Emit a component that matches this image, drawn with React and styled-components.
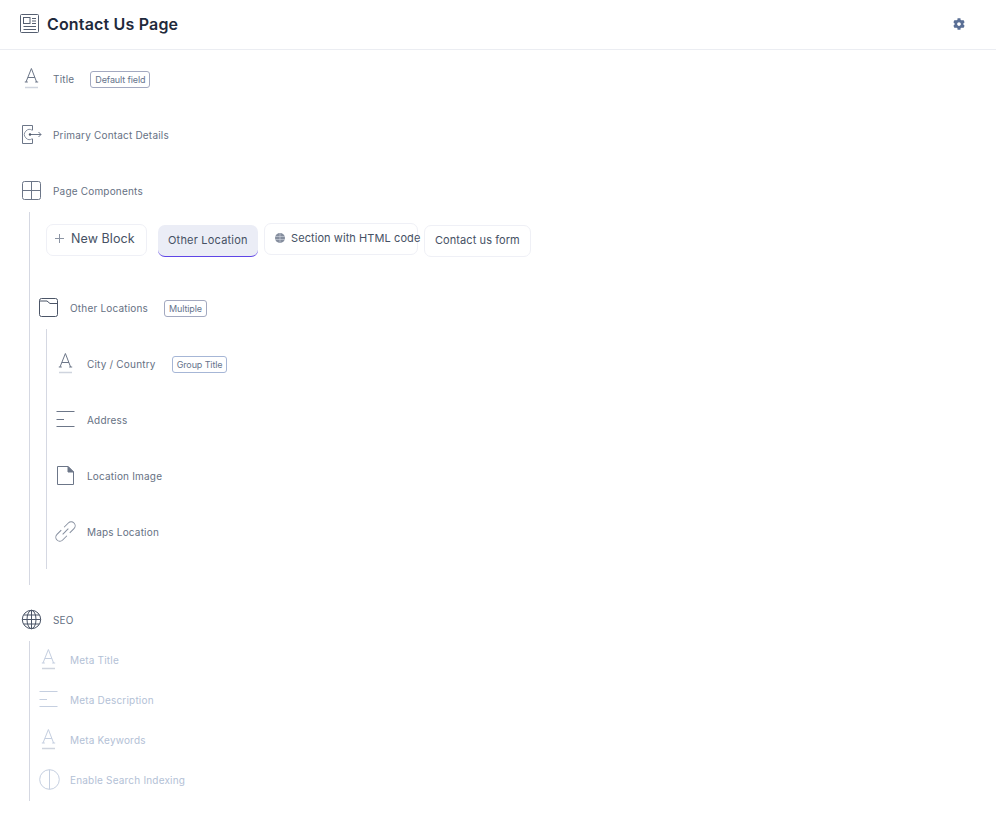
import React from 'react';
import styled, { createGlobalStyle } from 'styled-components';
import { FaCog } from 'react-icons/fa';

const GlobalStyle = createGlobalStyle`
  html, body {
    margin: 0;
    padding: 0;
    background: #fff;
    font-family: Inter, "Liberation Sans", sans-serif;
  }
`;

const Page = styled.div`
  width: 996px;
  min-height: 814px;
  background: #fff;
`;

const Header = styled.header`
  height: 49px;
  display: flex;
  align-items: center;
  padding: 0 31px 0 19px;
  border-bottom: 1px solid #ebedf2;
`;

const HeaderInner = styled.div`
  flex: 1;
  display: flex;
  align-items: center;
  padding-bottom: 1px;
`;

const PageTitle = styled.h1`
  margin: 0 auto 0 8px;
  font-size: 16px;
  font-weight: 600;
  letter-spacing: 0.17px;
  color: #1f2a3c;
`;

const Settings = styled.span`
  display: flex;
  color: #5a6f95;
  font-size: 12px;
`;

const Body = styled.main`
  padding: 9px 0 0 19px;
`;

const Row = styled.div`
  flex: none;
  height: 40px;
  display: flex;
  align-items: center;
  gap: 10px;
  margin-bottom: ${(p) => (p.$dense ? 0 : '16px')};
  color: ${(p) => (p.$muted ? '#b3c1d6' : '#667183')};
`;

const IconBox = styled.svg`
  width: 24px;
  height: 24px;
  flex: none;
  fill: none;
  stroke: ${(p) => (p.$muted ? '#c5cfe0' : '#6c7688')};
  stroke-width: 1;
`;

const Label = styled.span`
  font-size: 10px;
  letter-spacing: 0.19px;
  white-space: nowrap;
`;

const Badge = styled.span`
  height: 15px;
  display: inline-flex;
  align-items: center;
  padding: 0 4px;
  margin-left: 6px;
  font-size: 9px;
  letter-spacing: -0.12px;
  color: #66748c;
  border: 1px solid ${(p) => (p.$blue ? '#a6b6d6' : '#a3a9c0')};
  border-radius: 3px;
  white-space: nowrap;
`;

// the rail starts 1px below the row above it, the first child pulls back up
const Branch = styled.section`
  display: flex;
  flex-direction: column;
  margin: 1px 0 ${(p) => p.$after}px 10px;
  padding: ${(p) => p.$top || 0}px 0 1px 6px;
  border-left: 1px solid #d5d8e2;

  & > :first-child {
    margin-top: -1px;
  }
`;

const BlockBar = styled.div`
  flex: none;
  height: 77px;
  display: flex;
  align-items: flex-start;
  padding: 13px 0 0 10px;
  box-sizing: border-box;
`;

const Chip = styled.div`
  box-sizing: border-box;
  flex: none;
  width: ${(p) => p.$width}px;
  height: 32px;
  margin-top: ${(p) => p.$top || 0}px;
  margin-left: ${(p) => p.$left || 0}px;
  display: flex;
  align-items: center;
  gap: ${(p) => p.$gap || 6}px;
  padding-left: ${(p) => p.$pad || 10}px;
  padding-bottom: ${(p) => p.$lift || 0}px;
  font-size: ${(p) => p.$size || 11}px;
  letter-spacing: 0.08px;
  white-space: nowrap;
  color: #465164;
  background: #fff;
  border: 1px solid #eff0f6;
  border-radius: 7px;
`;

const ActiveChip = styled(Chip)`
  letter-spacing: 0.2px;
  background: #ebedf6;
  border: none;
  border-bottom: 1px solid #5f45e6;
`;

const PlusIcon = styled.svg`
  flex: none;
  width: 9px;
  height: 9px;
  stroke: #8b94a3;
  stroke-width: 1;
  fill: none;
`;

const WebIcon = styled.svg`
  flex: none;
  width: 10px;
  height: 10px;
  fill: #858e9e;
  stroke: #d4d8e0;
  stroke-width: 0.6;
`;

const A = () => (
  <>
    <path d="M7 15 12.400 1.500 17.600 15M8.800 10.500h7.200M5.800 15h3M16.200 15h3" />
    <path d="M6 20.500h13" stroke="#cfd4de" strokeWidth="1.500" />
  </>
);

const Lines = () => <path d="M3.500 3.500h18M3.500 11.500h7.500M3.500 18.500h18" />;

const icons = {
  text: <A />,
  lines: <Lines />,
  exit: (
    <>
      <path d="M13.500 7V2.500h-10v18h10V16" />
      <path d="M13.500 7.500a5 5 0 1 0 0 8" stroke="#8b94a3" />
      <path d="M11 11.500h11M19.500 9 22 11.500 19.500 14" />
      <circle cx="11" cy="11.500" r="1.200" fill="#4b5567" stroke="none" />
    </>
  ),
  grid: (
    <>
      <rect x="3.500" y="2.500" width="18" height="18" rx="2" />
      <path d="M12.500 2.500v18M3.500 11.500h18" />
    </>
  ),
  folder: (
    <>
      <rect x="3.500" y="2.500" width="18" height="18" rx="2" stroke="#4b5567" />
      <path d="M3.500 5H11l3 2.500h7.500" stroke="#4b5567" />
    </>
  ),
  file: (
    <>
      <path d="M4.500 2.500H15L20.500 8v12.500h-16z" />
      <path d="M15 2.500V8h5.500z" fill="#6c7688" />
    </>
  ),
  link: (
    <g transform="rotate(-45 12.500 11.500)" stroke="#868f9f">
      <path d="M10.500 7.500H4.500a4 4 0 0 0 0 8h6" />
      <path d="M14.500 7.500h6a4 4 0 0 1 0 8h-6" />
      <path d="M8.500 11.500h8" />
    </g>
  ),
  globe: (
    <>
      <circle cx="12.500" cy="11.500" r="9.200" stroke="#4b5567" />
      <ellipse cx="12.500" cy="11.500" rx="4.500" ry="9.200" stroke="#4b5567" />
      <path d="M12.500 2.300v18.400M3.300 11.500h18.400M4.500 7h16M4.500 16h16" stroke="#4b5567" />
    </>
  ),
  toggle: (
    <>
      <circle cx="13.500" cy="11.500" r="9.800" />
      <path d="M13.500 1.700v19.600" />
    </>
  ),
};

const Field = ({ icon, label, badge, blue, muted, dense }) => (
  <Row $muted={muted} $dense={dense}>
    <IconBox viewBox="0 0 24 24" $muted={muted}>{icons[icon]}</IconBox>
    <Label>{label}</Label>
    {badge && <Badge $blue={blue}>{badge}</Badge>}
  </Row>
);

export default function App() {
  return (
    <Page>
      <GlobalStyle />
      <Header>
        <HeaderInner>
          <svg width="20" height="20" viewBox="0 0 20 20" fill="none" stroke="#555f71" strokeWidth="1">
            <rect x="1.500" y="0.500" width="18" height="18" rx="1" />
            <rect x="4.500" y="3.500" width="6.500" height="6" />
            <path d="M13 4.500h4M13 7h4M13 9.500h4M4.500 12.500h12.500M4.500 15.500h12.500" />
          </svg>
          <PageTitle>Contact Us Page</PageTitle>
          <Settings><FaCog /></Settings>
        </HeaderInner>
      </Header>
      <Body>
        <Field icon="text" label="Title" badge="Default field" />
        <Field icon="exit" label="Primary Contact Details" />
        <Field icon="grid" label="Page Components" dense />
        <Branch $after={15}>
          <BlockBar>
            <Chip $width={101} $size={12.5} $pad={8} $gap={7} $lift={3}>
              <PlusIcon viewBox="0 0 9 9"><path d="M4.500 0v9M0 4.500h9" /></PlusIcon>
              New Block
            </Chip>
            <ActiveChip $width={100} $top={1} $left={11} $lift={2}>Other Location</ActiveChip>
            <Chip $width={154} $top={-1} $left={6} $lift={2}>
              <WebIcon viewBox="0 0 10 10">
                <circle cx="5" cy="5" r="5" stroke="none" />
                <path d="M0 3.500h10M0 6.500h10M5 0v10" />
              </WebIcon>
              Section with HTML code
            </Chip>
            <Chip $width={107} $top={1} $left={6} $lift={2}>Contact us form</Chip>
          </BlockBar>
          <Field icon="folder" label="Other Locations" badge="Multiple" dense />
          <Branch $after={15} $top={16}>
            <Field icon="text" label="City / Country" badge="Group Title" blue />
            <Field icon="lines" label="Address" />
            <Field icon="file" label="Location Image" />
            <Field icon="link" label="Maps Location" />
          </Branch>
        </Branch>
        <Field icon="globe" label="SEO" dense />
        <Branch $after={0}>
          <Field icon="text" label="Meta Title" muted dense />
          <Field icon="lines" label="Meta Description" muted dense />
          <Field icon="text" label="Meta Keywords" muted dense />
          <Field icon="toggle" label="Enable Search Indexing" muted dense />
        </Branch>
      </Body>
    </Page>
  );
}
